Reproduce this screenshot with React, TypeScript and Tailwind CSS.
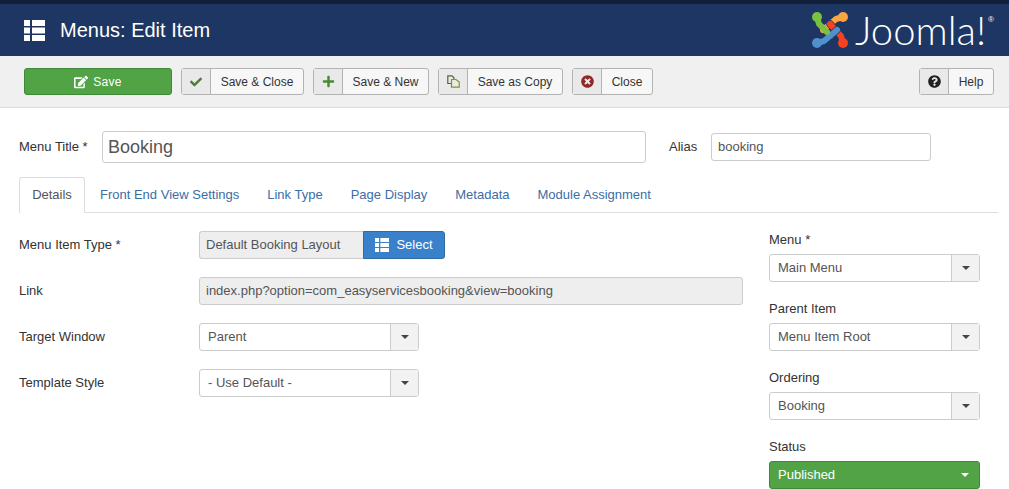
import { FaCheck, FaPlus, FaTimesCircle, FaQuestionCircle, FaEdit } from "react-icons/fa";
import type { ReactNode } from "react";

const NAVY = "#1e3664";

function JoomlaMark() {
  const bands = [
    { d: "M5 5 L7 12 L19 24", color: "#7ac143", cx: 5, cy: 5 },
    { d: "M31 5 L24 7 L11 18", color: "#f9a541", cx: 31, cy: 5 },
    { d: "M31 31 L29 24 L18 12", color: "#f44321", cx: 31, cy: 31 },
    { d: "M5 31 L12 29 L25 18", color: "#5091cd", cx: 5, cy: 31 },
  ];
  return (
    <svg width="36" height="36" viewBox="0 0 36 36" fill="none" strokeLinecap="round" strokeLinejoin="round">
      {bands.map((band) => (
        <g key={band.color}>
          <path d={band.d} stroke={NAVY} strokeWidth="7.5" />
          <path d={band.d} stroke={band.color} strokeWidth="6" />
          <circle cx={band.cx} cy={band.cy} r="5" fill={band.color} />
        </g>
      ))}
      {/* weave: green passes back over the blue band at the hub */}
      <path d="M10 15 L15 20" stroke="#7ac143" strokeWidth="6" />
    </svg>
  );
}

function ListIcon({ className }: { className: string }) {
  return (
    <svg viewBox="0 0 21 21" fill="currentColor" className={className}>
      <rect x="0" y="0" width="6" height="6" />
      <rect x="8" y="0" width="13" height="6" />
      <rect x="0" y="7.5" width="6" height="6" />
      <rect x="8" y="7.5" width="13" height="6" />
      <rect x="0" y="15" width="6" height="6" />
      <rect x="8" y="15" width="13" height="6" />
    </svg>
  );
}

function CopyIcon() {
  return (
    <svg width="13" height="13" viewBox="0 0 13 13" fill="none" strokeWidth="1.2">
      <path d="M4.5 8.5 H0.8 V0.8 H5 L7 2.8 V4.5" stroke="#4d6a2c" />
      <path d="M4.5 4.5 H9 L12.2 7 V12.2 H4.5 Z" stroke="#8a8f2a" />
    </svg>
  );
}

function ToolButton({ icon, label, width }: { icon: ReactNode; label: string; width: string }) {
  return (
    <button className={`flex h-[27px] items-stretch rounded-[3px] border border-[#b3b3b3] bg-[#f7f7f7] text-[12px] text-[#333] ${width}`}>
      <span className="flex w-[29px] shrink-0 items-center justify-center border-r border-[#b3b3b3] bg-[#e9e9e9]">
        {icon}
      </span>
      <span className="flex flex-1 items-center justify-center">{label}</span>
    </button>
  );
}

function Select({ value, width }: { value: string; width: string }) {
  return (
    <div className={`flex h-[28px] rounded-[3px] border border-[#ccc] bg-white text-[13px] text-[#555] ${width}`}>
      <span className="flex flex-1 items-center pl-[8px]">{value}</span>
      <span className="flex w-[28px] items-center justify-center border-l border-[#ccc] bg-[#f2f2f2]">
        <span className="h-0 w-0 border-x-[4px] border-t-[4px] border-x-transparent border-t-[#444]" />
      </span>
    </div>
  );
}

function Row({ label, children }: { label: string; children: ReactNode }) {
  return (
    <div className="flex items-center">
      <label className="w-[180px] text-[13px] text-[#333]">{label}</label>
      {children}
    </div>
  );
}

function SideField({ label, children }: { label: string; children: ReactNode }) {
  return (
    <div>
      <div className="mb-[6px] h-[15px] text-[13px] leading-[13px] text-[#333]">{label}</div>
      {children}
    </div>
  );
}

export default function App() {
  const tabs = ["Front End View Settings", "Link Type", "Page Display", "Metadata", "Module Assignment"];

  return (
    <div className="h-[489px] w-[1009px] overflow-hidden bg-white font-['Liberation_Sans',sans-serif]">
      {/* Header */}
      <div className="flex h-[56px] items-center justify-between border-t-[4px] border-[#12203c] bg-[#1e3664] pl-[24px] pr-[15px]">
        <div className="flex items-center">
          <ListIcon className="h-[21px] w-[21px] text-white" />
          <h1 className="ml-[15px] text-[20px] text-white">Menus: Edit Item</h1>
        </div>
        <div className="flex items-center">
          <JoomlaMark />
          <span className="ml-[7px] font-['Lato',sans-serif] text-[40px] font-light leading-none text-white">Joomla!</span>
          <span className="mb-[20px] ml-[2px] text-[8px] leading-none text-white">®</span>
        </div>
      </div>

      {/* Toolbar */}
      <div className="flex h-[52px] items-center justify-between border-b border-[#dcdcdc] bg-[#f0f0f0] pl-[24px] pr-[15px]">
        <div className="flex items-center gap-[9px]">
          <button className="flex h-[27px] w-[148px] items-center justify-center gap-[5px] rounded-[3px] border border-[#3e8a36] bg-[#51a346] text-[12px] text-white">
            <FaEdit className="text-[14px]" />
            <span className="tracking-[0.3px]">Save</span>
          </button>
          <ToolButton width="w-[123px]" icon={<FaCheck className="text-[12px] text-[#4a7c3a]" />} label="Save & Close" />
          <ToolButton width="w-[116px]" icon={<FaPlus className="text-[13px] text-[#4a8a32]" />} label="Save & New" />
          <ToolButton width="w-[125px]" icon={<CopyIcon />} label="Save as Copy" />
          <ToolButton width="w-[81px]" icon={<FaTimesCircle className="text-[13px] text-[#8f2a2a]" />} label="Close" />
        </div>
        <ToolButton width="w-[75px]" icon={<FaQuestionCircle className="text-[13px] text-[#222]" />} label="Help" />
      </div>

      {/* Form */}
      <div className="pl-[19px] pr-[11px] pt-[23px]">
        <div className="flex items-center">
          <label className="w-[83px] text-[13px] text-[#333]">Menu Title *</label>
          <input
            readOnly
            value="Booking"
            className="h-[32px] w-[544px] rounded-[3px] border border-[#ccc] px-[5px] text-[18px] text-[#555]"
          />
          <label className="ml-[23px] w-[42px] text-[13px] text-[#333]">Alias</label>
          <input
            readOnly
            value="booking"
            className="h-[28px] w-[220px] rounded-[3px] border border-[#ccc] px-[6px] pb-[2px] text-[13px] text-[#555]"
          />
        </div>

        {/* Tabs */}
        <div className="mt-[14px] flex h-[36px] items-stretch border-b border-[#ddd]">
          <div className="-mb-px flex w-[66px] items-center justify-center rounded-t-[3px] border border-b-0 border-[#ddd] bg-white pb-[2px] text-[13px] text-[#555]">
            Details
          </div>
          <div className="flex items-center gap-[28px] pl-[15px] text-[13px] text-[#3b6ea5]">
            {tabs.map((tab) => (
              <span key={tab}>{tab}</span>
            ))}
          </div>
        </div>

        <div className="flex">
          {/* Left column */}
          <div className="flex w-[724px] flex-col gap-[18px] pt-[18px]">
            <Row label="Menu Item Type *">
              <div className="flex h-[28px] w-[246px] text-[13px]">
                <span className="flex w-[164px] items-center rounded-l-[3px] border border-r-0 border-[#ccc] bg-[#eee] pl-[6px] text-[#555]">
                  Default Booking Layout
                </span>
                <span className="flex w-[82px] items-center justify-center gap-[7px] rounded-r-[3px] border border-[#2d6ca2] bg-[#3a81cc] text-white">
                  <ListIcon className="h-[14px] w-[14px]" />
                  Select
                </span>
              </div>
            </Row>
            <Row label="Link">
              <div className="flex h-[28px] w-[544px] items-center rounded-[3px] border border-[#ccc] bg-[#eee] pl-[6px] text-[13px] text-[#555]">
                index.php?option=com_easyservicesbooking&amp;view=booking
              </div>
            </Row>
            <Row label="Target Window">
              <Select value="Parent" width="w-[220px]" />
            </Row>
            <Row label="Template Style">
              <Select value="- Use Default -" width="w-[220px]" />
            </Row>
          </div>

          {/* Right column */}
          <div className="ml-[26px] flex w-[211px] flex-col gap-[20px] pt-[20px]">
            <SideField label="Menu *">
              <Select value="Main Menu" width="w-full" />
            </SideField>
            <SideField label="Parent Item">
              <Select value="Menu Item Root" width="w-full" />
            </SideField>
            <SideField label="Ordering">
              <Select value="Booking" width="w-full" />
            </SideField>
            <SideField label="Status">
              <div className="flex h-[28px] items-center justify-between rounded-[3px] border border-[#3e8a36] bg-[#51a346] pl-[8px] pr-[10px] text-[13px] text-white">
                Published
                <span className="h-0 w-0 border-x-[4px] border-t-[4px] border-x-transparent border-t-white" />
              </div>
            </SideField>
          </div>
        </div>
      </div>
    </div>
  );
}
